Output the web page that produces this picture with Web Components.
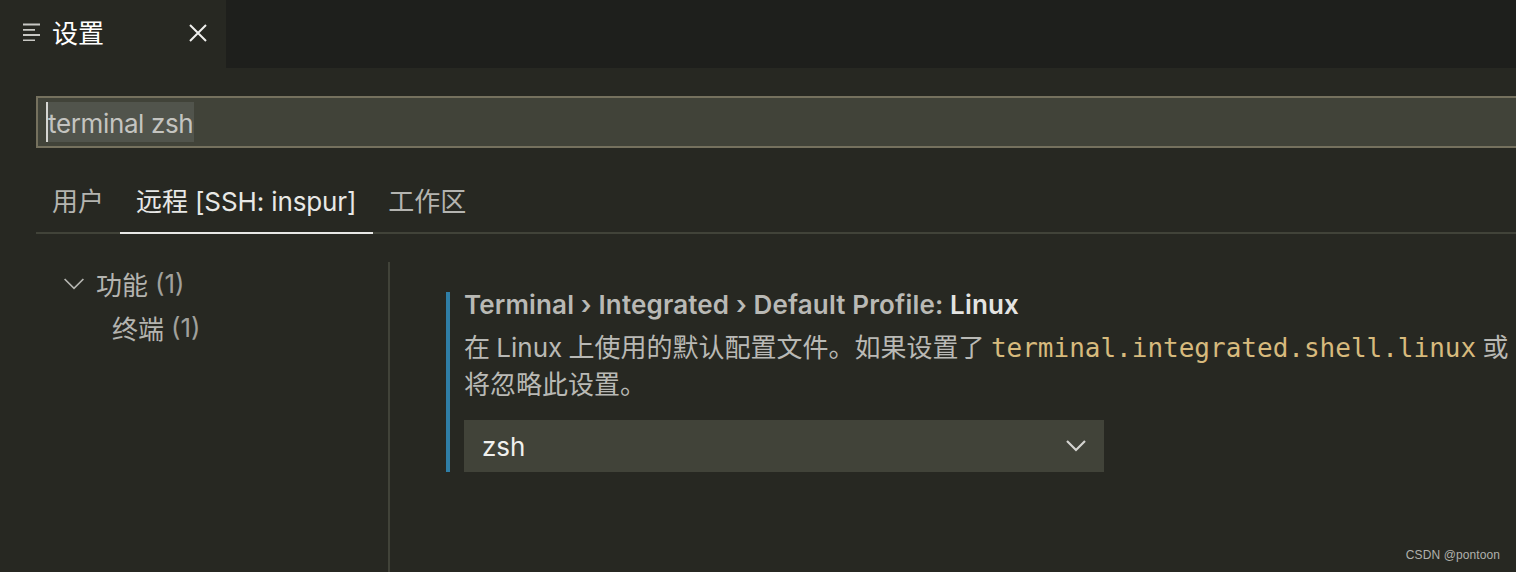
<!DOCTYPE html>
<html lang="zh">
<head>
<meta charset="utf-8">
<title>设置</title>
<style>
  html, body { margin: 0; height: 100%; background: #272822; overflow: hidden; }
  body { font-family: Inter, "Noto Sans CJK SC", sans-serif; }
</style>
</head>
<body>
<settings-page></settings-page>
<script>
class EditorTab extends HTMLElement {
  constructor() {
    super();
    this.attachShadow({ mode: 'open' });
    this.shadowRoot.innerHTML = `
    <style>
      :host { display: flex; height: 68px; background: #1e1f1c; }
      .tab {
        display: flex;
        align-items: center;
        width: 226px;
        box-sizing: border-box;
        padding-left: 23px;
        background: #272822;
        color: #fff;
        font-size: 26px;
      }
      .tab span { margin-left: 11px; flex: 1; line-height: 68px; }
      .list { width: 18px; height: 18px; margin-bottom: 4px; }
      .close { width: 20px; height: 20px; margin: 0 18px 2px 0; }
    </style>
    <div class="tab">
      <svg class="list" viewBox="0 0 18 18" fill="none" stroke="#c8c8c4" stroke-width="1.8">
        <path d="M0 1.5h17M0 6.8h12M0 12h17M0 17.4h12"/>
      </svg>
      <span><slot></slot></span>
      <svg class="close" viewBox="0 0 20 20" fill="none" stroke="#f0f0ee" stroke-width="2">
        <path d="M2 2l16 16M18 2L2 18"/>
      </svg>
    </div>`;
  }
}
customElements.define('editor-tab', EditorTab);

class SearchBox extends HTMLElement {
  constructor() {
    super();
    this.attachShadow({ mode: 'open' });
    this.shadowRoot.innerHTML = `
    <style>
      :host { display: block; margin: 28px -40px 0 36px; }
      .box {
        display: flex;
        height: 52px;
        box-sizing: border-box;
        border: 2px solid #75715e;
        background: #414339;
        padding: 4px 8px;
        color: #c4c4c0;
        font-size: 26px;
        line-height: 40px;
      }
      .sel {
        display: block;
        height: 40px;
        padding: 2px 1px 0 0;
        box-sizing: border-box;
        background: #51544c;
        border-left: 2px solid #d6d6d2;
        letter-spacing: -0.36px;
      }
    </style>
    <div class="box"><span class="sel"><slot></slot></span></div>`;
  }
}
customElements.define('search-box', SearchBox);

class ScopeTabs extends HTMLElement {
  constructor() {
    super();
    this.attachShadow({ mode: 'open' });
    this.shadowRoot.innerHTML = `
    <style>
      :host {
        display: flex;
        margin: 20px 0 0 36px;
        height: 66px;
        box-sizing: border-box;
        border-bottom: 2px solid #414339;
        font-size: 26px;
        color: #b4b4b0;
      }
      ::slotted(span) { padding: 0 16px; line-height: 68px; height: 66px; box-sizing: border-box; white-space: nowrap; }
      ::slotted(.active) {
        color: #e8e8e6;
        border-bottom: 2px solid #e8e8e6;
        letter-spacing: -0.12px;
        padding-right: 17px;
        margin-right: -1px;
      }
    </style>
    <slot></slot>`;
  }
}
customElements.define('scope-tabs', ScopeTabs);

class SettingsTree extends HTMLElement {
  constructor() {
    super();
    this.attachShadow({ mode: 'open' });
    this.shadowRoot.innerHTML = `
    <style>
      :host {
        display: block;
        width: 354px;
        margin: 28px 0 0 36px;
        box-sizing: border-box;
        border-right: 2px solid #414339;
        font-size: 26px;
        color: #b4b4b0;
      }
      .row { display: flex; align-items: center; height: 44px; box-sizing: border-box; padding: 0 0 1px 28px; }
      .row.sub { padding-left: 76px; }
      svg { width: 20px; height: 12px; margin-right: 12px; }
      .n { color: #a0a09c; margin-left: 7px; }
    </style>
    <div class="row">
      <svg viewBox="0 0 20 12" fill="none" stroke="#b4b4b0" stroke-width="1.7"><path d="M.6 1l9.4 9.4L19.4 1"/></svg>
      功能<span class="n">(1)</span>
    </div>
    <div class="row sub">终端<span class="n">(1)</span></div>`;
  }
}
customElements.define('settings-tree', SettingsTree);

class SettingItem extends HTMLElement {
  constructor() {
    super();
    this.attachShadow({ mode: 'open' });
    this.shadowRoot.innerHTML = `
    <style>
      :host {
        display: block;
        margin: 58px 0 0 56px;
        height: 180px;
        box-sizing: border-box;
        border-left: 4px solid #2f7ea6;
        padding-left: 14px;
        white-space: nowrap;
        color: #b9b9b5;
        font-size: 26px;
      }
      .title { font-weight: 600; line-height: 26px; height: 26px; letter-spacing: 0.15px; }
      .title b { color: #e4e4e2; font-weight: 600; }
      .desc { line-height: 37px; height: 74px; margin-top: 11px; word-spacing: -1px; }
      code { font-family: "DejaVu Sans Mono", monospace; font-size: 26px; line-height: 1; color: #d7ba7d; }
      .select {
        display: flex;
        align-items: center;
        justify-content: space-between;
        width: 640px;
        height: 52px;
        margin-top: 17px;
        box-sizing: border-box;
        padding: 0 18px;
        background: #414339;
        color: #f0f0ee;
      }
      svg { width: 20px; height: 12px; }
    </style>
    <div class="title">Terminal › Integrated › Default Profile: <b>Linux</b></div>
    <div class="desc">在 Linux 上使用的默认配置文件。如果设置了 <code>terminal.integrated.shell.linux</code> 或<br>将忽略此设置。</div>
    <div class="select"><slot></slot>
      <svg viewBox="0 0 20 12" fill="none" stroke="#d4d4d0" stroke-width="2.2"><path d="M1 1l9 9 9-9"/></svg>
    </div>`;
  }
}
customElements.define('setting-item', SettingItem);

class SettingsPage extends HTMLElement {
  constructor() {
    super();
    this.attachShadow({ mode: 'open' });
    this.shadowRoot.innerHTML = `
    <style>
      :host { display: flex; flex-direction: column; height: 572px; width: 1516px; overflow: hidden; position: relative; }
      .body { display: flex; flex: 1; min-height: 0; }
      .mark {
        position: absolute;
        right: 16px;
        bottom: 10px;
        font: 12px "Liberation Sans", sans-serif;
        letter-spacing: 0.1px;
        color: #b0b0ac;
      }
    </style>
    <editor-tab>设置</editor-tab>
    <search-box>terminal zsh</search-box>
    <scope-tabs>
      <span>用户</span><span class="active">远程 [SSH: inspur]</span><span>工作区</span>
    </scope-tabs>
    <div class="body">
      <settings-tree></settings-tree>
      <setting-item>zsh</setting-item>
    </div>
    <div class="mark">CSDN @pontoon</div>`;
  }
}
customElements.define('settings-page', SettingsPage);
</script>
</body>
</html>
